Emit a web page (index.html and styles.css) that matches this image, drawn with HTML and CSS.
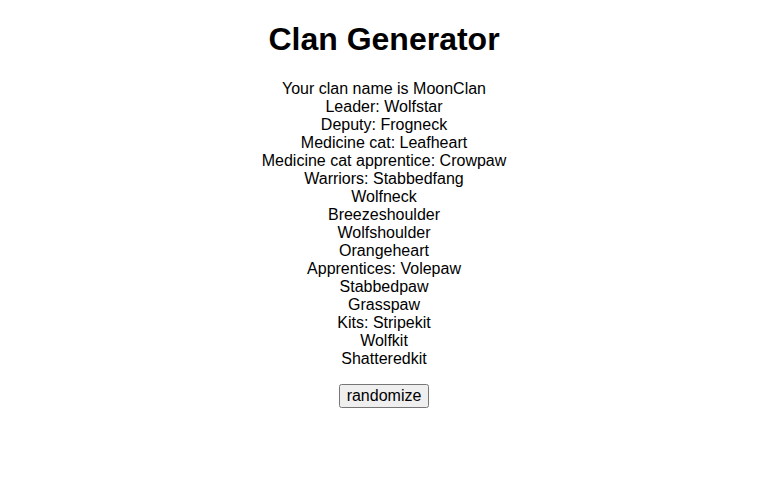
FILE: index.html
```html
<!DOCTYPE html>
<html>
  <head>
    <title>Clan Generator</title>
    <meta charset="UTF-8" />
    <meta name="viewport" content="width=device-width, initial-scale=1" />
    <link rel="stylesheet" href="styles.css">
  </head>
  <body>
    <h1>Clan Generator</h1>

    <div class="clan" id="clan">
      <div>Your clan name is MoonClan</div>
      <div>Leader: Wolfstar</div>
      <div>Deputy: Frogneck</div>
      <div>Medicine cat: Leafheart</div>
      <div>Medicine cat apprentice: Crowpaw</div>
      <div>Warriors: Stabbedfang<br />Wolfneck<br />Breezeshoulder<br />Wolfshoulder<br />Orangeheart</div>
      <div>Apprentices: Volepaw<br />Stabbedpaw<br />Grasspaw</div>
      <div>Kits: Stripekit<br />Wolfkit<br />Shatteredkit</div>
    </div>

    <button class="randomize" type="button">randomize</button>
  </body>
</html>
```

FILE: styles.css
```css
body {
  margin: 0;
  font-family: "Liberation Sans", Arial, sans-serif;
  color: #000;
  background: #fff;
  text-align: center;
}
h1 {
  font-size: 32px;
  margin: 21.44px 0;
}
.clan {
  font-size: 16px;
  line-height: 18px;
  margin-bottom: 16px;
}
.randomize {
  font-family: "Liberation Sans", Arial, sans-serif;
  font-size: 16px;
  padding: 1px 6px;
}
```
